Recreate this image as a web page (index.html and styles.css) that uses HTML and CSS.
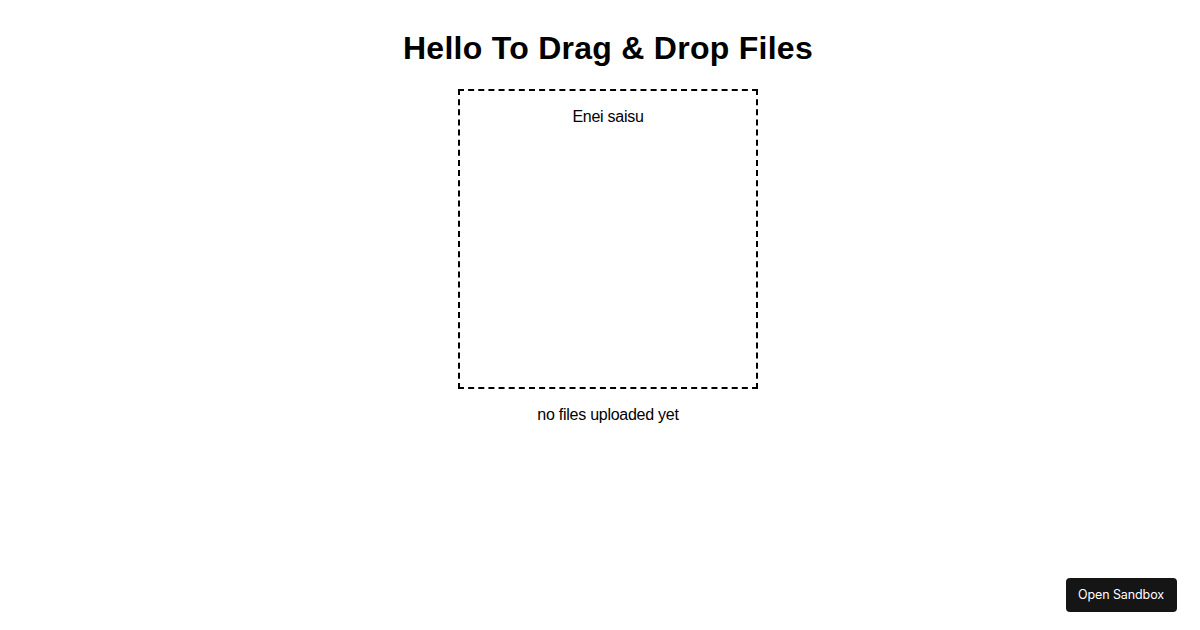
FILE: index.html
```html
<!DOCTYPE html>
<html>
<head>
<meta charset="utf-8">
<link rel="stylesheet" href="styles.css">
</head>
<body>
<div class="app">
  <h1 class="title">Hello To Drag &amp; Drop Files</h1>
  <div class="dropzone">
    <p class="hint">Enei saisu</p>
  </div>
  <p class="status">no files uploaded yet</p>
</div>
<a class="sandbox-btn">Open Sandbox</a>
</body>
</html>
```
FILE: styles.css
```css
html, body {
  background: #fff;
}
body {
  margin: 8px;
  font-family: "Liberation Sans", Arial, sans-serif;
  color: #000;
}
.app {
  text-align: center;
  padding: 1px 0 0 16px;
  display: flex;
  flex-direction: column;
  align-items: center;
}
.title {
  font-size: 32px;
  font-weight: bold;
  margin: 21.44px 0;
  letter-spacing: 0.27px;
}
.dropzone {
  box-sizing: border-box;
  width: 300px;
  height: 300px;
  border: 2px dashed #000;
}
.hint, .status {
  font-size: 16px;
  margin: 17px 0 16px;
  letter-spacing: -0.26px;
}
.sandbox-btn {
  position: fixed;
  right: 23px;
  bottom: 18px;
  background: #151515;
  color: #fff;
  font-family: Inter, "Liberation Sans", sans-serif;
  font-size: 12.5px;
  border-radius: 4px;
  padding: 0 13px 0 12px;
  height: 34px;
  line-height: 34px;
  letter-spacing: -0.1px;
}
```
